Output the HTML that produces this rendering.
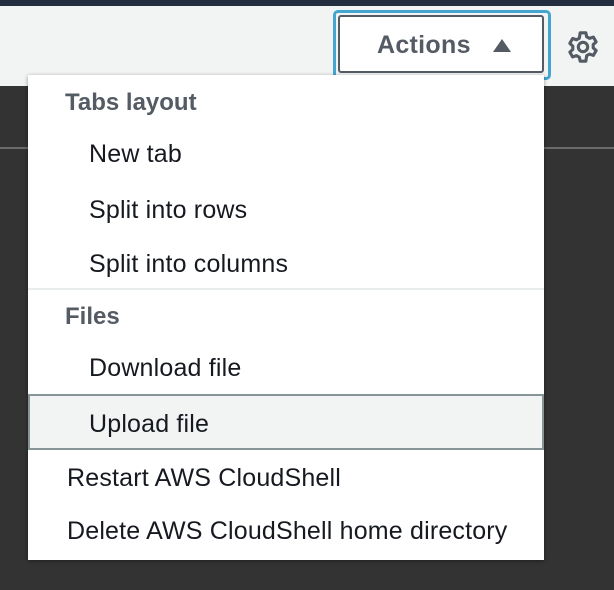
<!DOCTYPE html>
<html><head><style>
body{margin:0;width:614px;height:590px;overflow:hidden;background:#333;font-family:"Liberation Sans",Arial,sans-serif;position:relative}
.top{position:absolute;left:0;top:0;width:614px;height:6px;background:#232f3e}
.bar{position:absolute;left:0;top:6px;width:614px;height:80px;background:#f2f3f3}
.line{position:absolute;left:0;top:147px;width:614px;height:2px;background:#6b6b6b}
.focus{position:absolute;left:333px;top:10px;width:212px;height:64px;border:3px solid #44a6d0;border-radius:5px}
.btn{position:absolute;left:338px;top:15px;width:202px;height:54px;border:2px solid #545b64;border-radius:3px;background:#fff}
.btn span{position:absolute;left:37px;top:14px;font-size:25px;font-weight:bold;color:#545b64;letter-spacing:0.3px}
.tri{position:absolute;left:153px;top:22px;width:0;height:0;border-left:9px solid transparent;border-right:9px solid transparent;border-bottom:13px solid #545b64}
.menu{position:absolute;left:28px;top:75px;width:516px;height:485px;background:#fff;box-shadow:0 1px 4px rgba(0,0,0,.4)}
.it{position:absolute;font-size:25px;color:#16191f;white-space:nowrap;line-height:28px;letter-spacing:0.18px}
.h{font-weight:bold;color:#545b64;font-size:24px;letter-spacing:0}
.sep{position:absolute;left:0;width:516px;height:2px;background:#eaeded}
.hl{position:absolute;left:0;top:319px;width:512px;height:52px;background:#f2f3f3;border:2px solid #879596}
</style></head><body>
<div class="top"></div><div class="bar"></div><div class="line"></div>
<div class="focus"></div>
<div class="btn"><span>Actions</span><div class="tri"></div></div>
<svg style="position:absolute;left:566px;top:30px" width="34" height="34" viewBox="0 0 24 24"><path fill="none" stroke="#545b64" stroke-width="2.2" stroke-linejoin="round" d="M10 2h4l.6 2.8 2 1.1 2.7-.9 2 3.4-2.1 1.9v2.3l2.1 1.9-2 3.4-2.7-.9-2 1.1L14 22h-4l-.6-2.8-2-1.1-2.7.9-2-3.4 2.1-1.9v-2.3L2.7 9.4l2-3.4 2.7.9 2-1.1z"/><circle cx="12" cy="12" r="3.3" fill="none" stroke="#545b64" stroke-width="2.2"/></svg>
<div class="menu">
<div class="it h" style="left:37px;top:14px">Tabs layout</div>
<div class="it" style="left:61px;top:65px">New tab</div>
<div class="it" style="left:61px;top:121px">Split into rows</div>
<div class="it" style="left:61px;top:175px">Split into columns</div>
<div class="sep" style="top:213px"></div>
<div class="it h" style="left:37px;top:228px">Files</div>
<div class="it" style="left:61px;top:279px">Download file</div>
<div class="hl"></div>
<div class="it" style="left:61px;top:335px">Upload file</div>
<div class="it" style="left:39px;top:389px">Restart AWS CloudShell</div>
<div class="it" style="left:39px;top:442px">Delete AWS CloudShell home directory</div>
</div>
</body></html>
